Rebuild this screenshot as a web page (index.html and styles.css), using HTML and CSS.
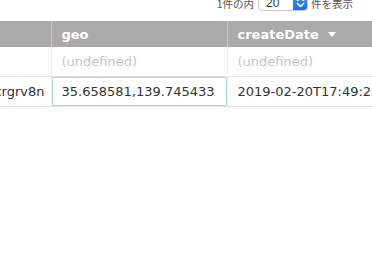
FILE: index.html
```html
<!DOCTYPE html>
<html>
<head>
<meta charset="utf-8">
<link rel="stylesheet" href="styles.css">
</head>
<body>
<div class="topbar">
  <span class="lbl">1件の内</span>
  <div class="select">
    <span class="val">20</span>
    <span class="arrow"><svg width="9" height="14" viewBox="0 0 9 14"><path d="M1.5 5.5 L4.5 2.5 L7.5 5.5 M1.5 8.5 L4.5 11.5 L7.5 8.5" fill="none" stroke="#fff" stroke-width="1.5" stroke-linecap="round" stroke-linejoin="round"/></svg></span>
  </div>
  <span class="lbl right">件を表示</span>
</div>
<div class="viewport">
  <table class="grid">
    <colgroup><col class="c1"><col class="c2"><col class="c3"></colgroup>
    <thead>
      <tr class="head">
        <th>id</th>
        <th>geo</th>
        <th><span class="hname">createDate</span><svg class="sort" width="8" height="6" viewBox="0 0 8 6"><path d="M0 0 H8 L4 5 Z" fill="#fff"/></svg></th>
      </tr>
    </thead>
    <tbody>
      <tr class="filter">
        <td></td>
        <td class="undef">(undefined)</td>
        <td class="undef">(undefined)</td>
      </tr>
      <tr class="data">
        <td class="idcell">0a1f2e9crgrv8n</td>
        <td class="sel">35.658581,139.745433</td>
        <td>2019-02-20T17:49:22.000Z</td>
      </tr>
    </tbody>
  </table>
</div>
</body>
</html>
```
FILE: styles.css
```css
html, body {
  margin: 0;
  padding: 0;
  background: #fff;
  overflow: hidden;
}
body {
  font-family: "DejaVu Sans", Verdana, sans-serif;
  color: #333;
  width: 372px;
  height: 265px;
}
.topbar {
  display: flex;
  justify-content: flex-end;
  align-items: flex-end;
  gap: 4px;
  height: 20px;
  margin-top: -9px;
  padding-right: 19px;
}
.lbl {
  font-family: "Noto Sans CJK JP", sans-serif;
  font-size: 10.5px;
  line-height: 14px;
  color: #555;
}
.lbl.right { margin-left: -1px; }
.select {
  display: flex;
  align-items: stretch;
  width: 50px;
  height: 20px;
  box-sizing: border-box;
  border: 1px solid #c8c8c8;
  border-radius: 4px;
  overflow: hidden;
  background: #fff;
}
.select .val {
  flex: 1;
  align-self: flex-end;
  font-family: "Liberation Sans", sans-serif;
  font-size: 12px;
  line-height: 13px;
  color: #333;
  padding-left: 7px;
}
.select .arrow {
  width: 14px;
  background: linear-gradient(#4a9af5, #1f6fe3);
  display: flex;
  align-items: flex-end;
  justify-content: center;
  padding-bottom: 1px;
}
.viewport {
  margin-top: 10px;
  overflow: hidden;
  width: 372px;
}
.grid {
  margin-left: -100px;
  border-collapse: collapse;
  table-layout: fixed;
  width: 650px;
  font-size: 13px;
}
.c1 { width: 151px; }
.c2 { width: 176px; }
.c3 { width: 323px; }
.head th {
  background: #aaaaaa;
  color: #fff;
  font-weight: bold;
  text-align: left;
  height: 26px;
  padding: 0 0 0 10px;
  border-left: 1px solid #c8c8c8;
  white-space: nowrap;
}
.head th:first-child { border-left: none; color: transparent; }
.hname { margin-right: 9px; }
.sort { vertical-align: 1px; }
tbody td {
  height: 29px;
  padding: 0 0 0 10px;
  border-left: 1px solid #eeeeee;
  border-bottom: 1px solid #e2e2e2;
  white-space: nowrap;
  overflow: hidden;
}
tbody td:first-child { border-left: none; }
.undef { color: #c6c6c6; }
.data td { color: #333; }
.idcell {
  text-align: right;
  padding: 0 6px 0 0;
}
.sel {
  box-shadow: inset 0 0 0 1px #a9d3f3, 0 0 5px 1px rgba(90, 170, 235, 0.5);
  border-radius: 2px;
}
```
